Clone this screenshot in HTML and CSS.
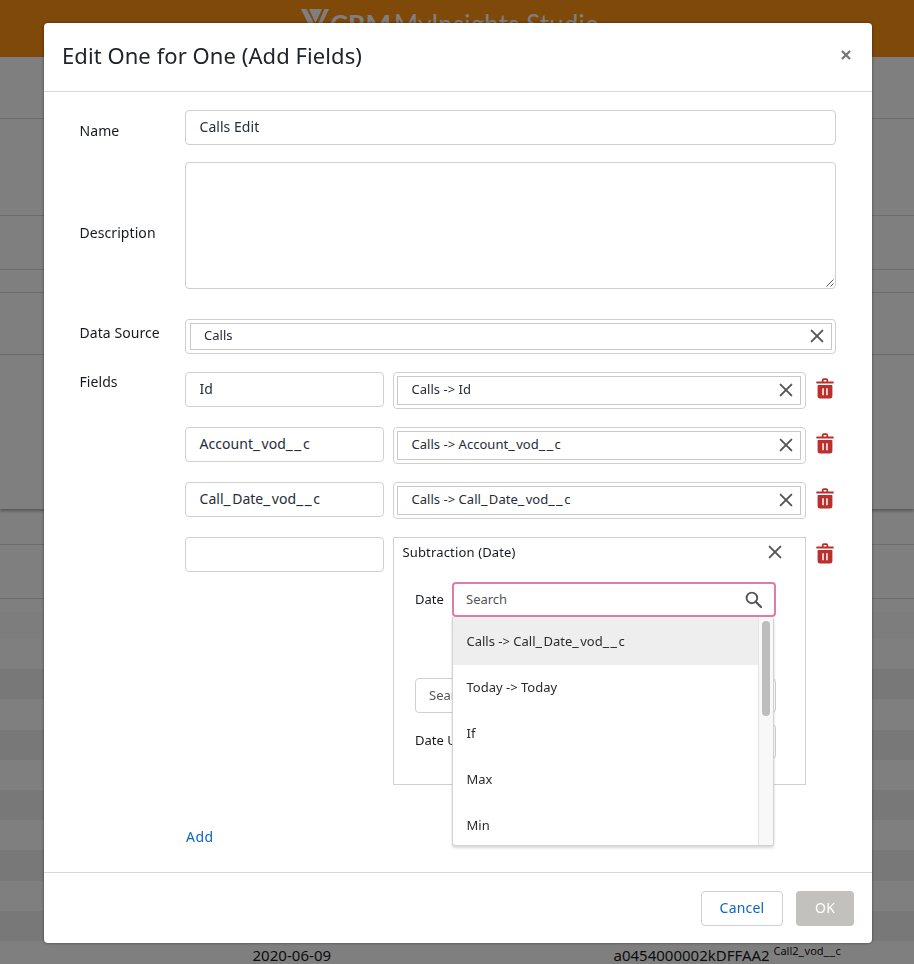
FILE: index.html
```html
<!DOCTYPE html>
<html lang="en">
<head>
<meta charset="utf-8">
<title>MyInsights Studio</title>
<link rel="stylesheet" href="styles.css">
</head>
<body>
<svg class="defs" width="0" height="0">
  <symbol id="close" viewBox="0 0 14 14"><path d="M1.6 1.6 12.4 12.4M12.4 1.6 1.6 12.4" fill="none" stroke="currentColor" stroke-width="1.9" stroke-linecap="round"/></symbol>
  <symbol id="trash" viewBox="0 0 18 21"><path d="M6.700 4V2.300Q6.700 1.200 7.800 1.200h2.400q1.100 0 1.100 1.100V4" fill="none" stroke="currentColor" stroke-width="1.800"/><path d="M.9 3.600h16.200q.7 0 .7.9t-.7.9H.9q-.7 0-.7-.9t.7-.9z" fill="currentColor"/><path fill-rule="evenodd" d="M2.300 7.100h13.400q.7 0 .7.7v10.400q0 2.400-2.400 2.400H4q-2.400 0-2.400-2.400V7.800q0-.7.7-.7zM6.300 10.300v6.900h1.500v-6.900zM10.200 10.300v6.900h1.500v-6.900z" fill="currentColor"/></symbol>
</svg>

<div class="page">
  <header class="brand">
    <svg class="brand-mark" width="28" height="26" viewBox="0 0 28 26"><path d="M0 0h5.500l10 19-2.500 7zM8 0h13l-6.500 14zM23.500 0H28L15.500 26l-1-5z" fill="currentColor"/></svg>
    <span class="brand-crm">CRM</span><span class="brand-name">MyInsights Studio</span>
  </header>
  <div class="band b1"></div>
  <div class="band b2"></div>
  <div class="band b3"></div>
  <div class="band b4"></div>
  <div class="band b5"></div>
  <div class="band b6"></div>
  <div class="band b7"></div>
  <div class="band b8"></div>
  <div class="rows">
    <div class="row first"></div><div class="row soft"></div><div class="row"></div><div class="row"></div>
    <div class="row"></div><div class="row"></div><div class="row"></div><div class="row"></div>
    <div class="row"></div><div class="row"></div><div class="row"></div><div class="row"></div>
    <div class="row data"><span class="date">2020-06-09</span><span class="rec">a0454000002kDFFAA2</span><span class="obj">Call2<i>_</i>vod<i>__</i>c</span></div>
  </div>
</div>

<div class="backdrop">
  <section class="modal">
    <header class="modal-head"><h1>Edit One for One (Add Fields)</h1>
      <svg class="modal-close" width="10" height="10" viewBox="0 0 10 10"><path d="M1 1 9 9M9 1 1 9" stroke="currentColor" stroke-width="2.300" fill="none"/></svg>
    </header>

    <div class="modal-body">
      <div class="form-row name-row"><label>Name</label><div class="input grow">Calls Edit</div></div>
      <div class="form-row desc-row"><label>Description</label>
        <div class="textarea"><svg width="8" height="8" viewBox="0 0 8 8"><path d="M.5 7.500 7.500.5M4.500 7.500l3-3" stroke="#444" stroke-width=".9" fill="none"/></svg></div>
      </div>
      <div class="form-row source-row"><label>Data Source</label>
        <div class="lookup source"><div class="pill"><span>Calls</span><svg class="x"><use href="#close"/></svg></div></div>
      </div>
      <div class="form-row fields-row"><label>Fields</label>
        <div class="fields">
          <div class="field"><div class="input">Id</div><div class="lookup"><div class="pill"><span>Calls -&gt; Id</span><svg class="x"><use href="#close"/></svg></div></div><svg class="trash"><use href="#trash"/></svg></div>
          <div class="field"><div class="input">Account<i>_</i>vod<i>__</i>c</div><div class="lookup"><div class="pill"><span>Calls -&gt; Account<i>_</i>vod<i>__</i>c</span><svg class="x"><use href="#close"/></svg></div></div><svg class="trash"><use href="#trash"/></svg></div>
          <div class="field"><div class="input">Call<i>_</i>Date<i>_</i>vod<i>__</i>c</div><div class="lookup"><div class="pill"><span>Calls -&gt; Call<i>_</i>Date<i>_</i>vod<i>__</i>c</span><svg class="x"><use href="#close"/></svg></div></div><svg class="trash"><use href="#trash"/></svg></div>
          <div class="field last"><div class="input"></div>
            <div class="func">
              <div class="func-head"><span>Subtraction (Date)</span><svg class="x"><use href="#close"/></svg></div>
              <div class="func-line"><span class="func-label">Date</span>
                <div class="search active"><span>Search</span>
                  <svg width="18" height="18" viewBox="0 0 18 18"><circle cx="6.900" cy="6.900" r="5.300" fill="none" stroke="currentColor" stroke-width="1.900"/><path d="M10.800 10.800 16 16" stroke="currentColor" stroke-width="2.300" stroke-linecap="round"/></svg>
                  <div class="menu">
                    <div class="options">
                      <div class="option on">Calls -&gt; Call<i>_</i>Date<i>_</i>vod<i>__</i>c</div>
                      <div class="option">Today -&gt; Today</div>
                      <div class="option">If</div>
                      <div class="option">Max</div>
                      <div class="option">Min</div>
                    </div>
                    <div class="track"><div class="thumb"></div></div>
                  </div>
                </div>
              </div>
              <div class="search second"><span>Search</span></div>
              <div class="func-line unit"><span class="func-label">Date U</span><div class="select"></div></div>
            </div>
            <svg class="trash"><use href="#trash"/></svg>
          </div>
        </div>
      </div>
      <a class="add">Add</a>
    </div>

    <footer class="modal-foot"><button class="btn cancel">Cancel</button><button class="btn ok">OK</button></footer>
  </section>
</div>
</body>
</html>
```
FILE: styles.css
```css
* { box-sizing: border-box; }
html, body { margin: 0; height: 964px; overflow: hidden; }
body { font-family: "Noto Sans", sans-serif; font-size: 14px; line-height: 20px; color: #16191f; background: #fff; }
.defs { position: absolute; }
/* Wider underscores in API names */
i { font-style: normal; font-size: 1.12em; line-height: 1; letter-spacing: .1em; }

/* Page behind the dialog */
.page { height: 964px; overflow: hidden; }
.brand { height: 57px; background: #ff9214; color: #fff; display: flex; padding: 9px 0 0 301px; }
.brand-mark { flex: none; }
.brand-crm { font: 700 27px/30px Lato, sans-serif; margin-left: 1px; width: 64px; letter-spacing: .2px; }
.brand-name { font: 400 26px/30px Lato, sans-serif; white-space: nowrap; letter-spacing: .1px; }
.band { border-bottom: 1px solid #d8d8dc; }
.b1 { height: 62px; }
.b2 { height: 97px; }
.b3 { height: 54px; }
.b4 { height: 23px; }
.b5 { height: 62px; }
.b6 { height: 154px; border-bottom: 0; box-shadow: 0 2px 3px #aaa; }
.b7 { height: 36px; }
.b8 { height: 54px; }
.row { height: 30.200px; }
.row:nth-child(even) { background: #f0f0f0; }
.row.first { height: 13px; }
.row.soft { height: 27px; background: #fafafa; }
.row.data { display: flex; white-space: nowrap; height: 23px; line-height: 28px; padding-left: 252.500px; color: #181818; }
.date { width: 361px; font-size: 15px; letter-spacing: .04px; }
.rec { width: 160px; font-size: 15px; }
.obj { font-size: 11px; line-height: 20px; }
.obj i { letter-spacing: .04em; }

/* Dialog */
.backdrop { position: fixed; inset: 0; padding: 23px 42px 21px 44px; background: rgba(0, 0, 0, .5); }
.modal { height: 920px; background: #fff; border-radius: 4px; box-shadow: 0 0 3px rgba(0, 0, 0, .5); display: flex; flex-direction: column; }
.modal-head { height: 69px; flex: none; border-bottom: 1px solid #d8d8d8; display: flex; justify-content: space-between; padding: 17px 21px 0 18px; }
h1 { margin: 0; font-size: 22px; font-weight: 400; line-height: 30px; letter-spacing: .07px; color: #20242a; }
.modal-close { margin-top: 9.500px; color: #757575; }
.modal-body { flex: 1; padding: 18px 36px 0 35px; }
.form-row { display: flex; }
.form-row > label { width: 106px; flex: none; padding-left: .5px; letter-spacing: .07px; }
.name-row { height: 52px; }
.name-row label { padding-top: 11px; }
.desc-row { height: 157px; }
.desc-row label { padding-top: 61px; }
.source-row { height: 53px; }
.source-row label { padding-top: 4px; }
.input, .search, .select, .textarea, .lookup { border: 1px solid #d0d0d0; border-radius: 4px; background: #fff; }
.input { height: 35px; width: 199px; flex: none; padding: 0 13.500px; line-height: 31px; letter-spacing: .04px; color: #252c3a; }
.input.grow { width: auto; flex: 1; }
.textarea { height: 127px; flex: 1; display: flex; align-items: flex-end; justify-content: flex-end; padding: 1px; }
.lookup { width: 413px; height: 37px; padding: 3px 4px 3px 3px; }
.lookup.source { flex: 1; width: auto; height: 35px; padding: 3px 3px 3px 4px; }
.pill { height: 100%; border: 1px solid #c9c9c9; display: flex; justify-content: space-between; padding: 0 7px 0 13.500px; font-size: 13px; line-height: 24px; letter-spacing: .03px; color: #252c3a; }
.source .pill { line-height: 22px; padding-left: 13px; }
.x { width: 14px; height: 14px; flex: none; color: #555; margin-top: 6px; }
.source .x { margin-top: 5px; }
.fields-row label { padding-top: 0; }
.fields { flex: 1; }
.field { display: flex; height: 55px; align-items: flex-start; }
.field .lookup, .func { margin-left: 9px; }
.trash { width: 18px; height: 21px; margin: 6px 0 0 10px; color: #ba302d; flex: none; }
.field.last { height: 290px; }
.func { width: 413px; height: 248px; flex: none; border: 1px solid #d0d0d0; font-size: 13px; }
.func-head { height: 44px; display: flex; justify-content: space-between; padding: 4px 23px 0 8.500px; letter-spacing: .15px; }
.func-head .x { margin-top: 3px; }
.func-line { display: flex; padding: 0 29px 0 21px; line-height: 35px; }
.func-label { width: 37px; flex: none; white-space: nowrap; }
.search { height: 35px; color: #555; font-size: 13px; line-height: 33px; padding: 0 13px; }
.search.active { position: relative; flex: 1; border: 2px solid #e07ba7; padding: 0 12px; line-height: 31px; display: flex; justify-content: space-between; }
.search.active > svg { margin: 7px -1px 0 0; color: #555; }
.second { margin: 61px 29px 11px 21px; }
.unit { line-height: 33px; }
.select { flex: 1; height: 35px; }
.menu { position: absolute; z-index: 2; left: -2px; top: 33px; width: 322px; height: 229px; display: flex; background: #fff; border: 1px solid #d2d2d2; border-top: 0; border-radius: 0 3px 3px 3px; box-shadow: 0 2px 3px rgba(0, 0, 0, .16); overflow: hidden; color: #2b2b2b; }
.options { flex: 1; }
.option { height: 46px; padding-left: 13.500px; line-height: 44px; }
.option.on { background: #eee; height: 48px; padding-top: 2px; }
.track { width: 15px; border-left: 1px solid #e4e4e4; background: #f8f8f8; padding: 4px 3px; }
.thumb { height: 95px; width: 8px; border-radius: 4px; background: #bdbdbd; }
.add { display: block; margin: 0 0 0 107px; color: #0b66c3; letter-spacing: .5px; }
.modal-foot { height: 71px; flex: none; border-top: 1px solid #d8d8d8; display: flex; justify-content: flex-end; gap: 13px; padding: 18px 18px 0; }
.btn { height: 35px; border-radius: 4px; font: 14px/20px "Noto Sans", sans-serif; padding: 0 0 2px; letter-spacing: .2px; }
.cancel { width: 82px; border: 1px solid #d0d0d0; background: #fff; color: #0b66c3; }
.ok { width: 58px; border: 0; background: #c3c1bd; color: #fff; }
```
